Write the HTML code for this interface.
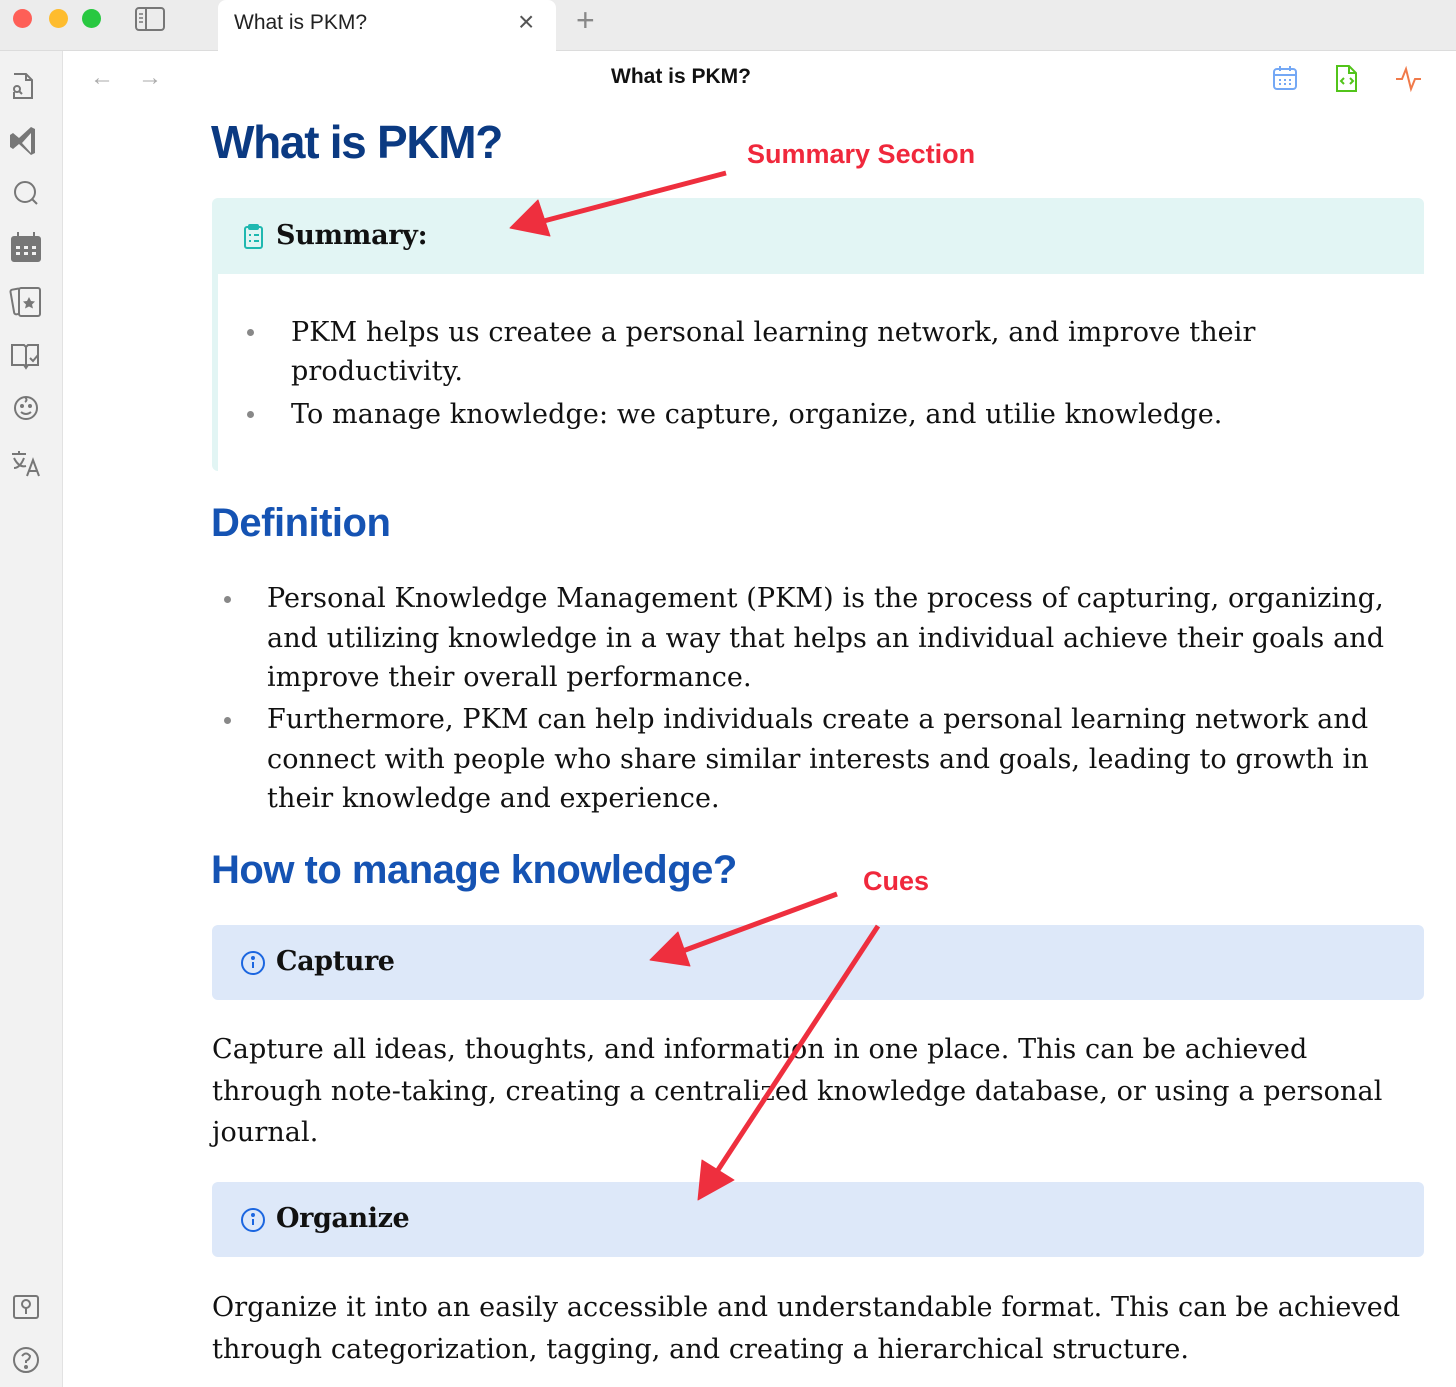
<!DOCTYPE html>
<html><head><meta charset="utf-8">
<style>
*{margin:0;padding:0;box-sizing:border-box}
body{width:1456px;height:1387px;overflow:hidden;background:#fff;font-family:"Liberation Sans",sans-serif;position:relative}
.abs{position:absolute}
.serif{font-family:"DejaVu Serif","Liberation Serif",serif;color:#111;font-size:27px;letter-spacing:0.1px;white-space:nowrap}
.h{font-weight:bold;color:#1553b3;white-space:nowrap}
.dot{position:absolute;width:7px;height:7px;border-radius:50%;background:#888}
</style></head><body>
<!-- tab bar -->
<div class="abs" style="left:0;top:0;width:1456px;height:51px;background:#ececec;border-bottom:1px solid #dcdcdc"></div>
<div class="abs" style="left:13px;top:9px;width:19px;height:19px;border-radius:50%;background:#fe5f57"></div>
<div class="abs" style="left:49px;top:9px;width:19px;height:19px;border-radius:50%;background:#febc2e"></div>
<div class="abs" style="left:82px;top:9px;width:19px;height:19px;border-radius:50%;background:#28c840"></div>
<svg class="abs" style="left:134px;top:6px" width="32" height="26"><rect x="2" y="2" width="28" height="22" rx="3" fill="none" stroke="#777" stroke-width="2"/><line x1="12" y1="2" x2="12" y2="24" stroke="#777" stroke-width="2"/><line x1="5" y1="8" x2="9" y2="8" stroke="#777" stroke-width="1.5"/><line x1="5" y1="12" x2="9" y2="12" stroke="#777" stroke-width="1.5"/><line x1="5" y1="16" x2="9" y2="16" stroke="#777" stroke-width="1.5"/></svg>
<div class="abs" style="left:218px;top:0;width:338px;height:52px;background:#fff;border-radius:8px 8px 0 0"></div>
<div class="abs" style="left:234px;top:11px;font-size:21px;color:#222">What is PKM?</div>
<div class="abs" style="left:518px;top:6px;font-size:28px;color:#555">×</div>
<div class="abs" style="left:576px;top:2px;font-size:32px;color:#888;font-weight:300">+</div>
<!-- sidebar -->
<div class="abs" style="left:0;top:51px;width:63px;height:1336px;background:#f2f2f2;border-right:1px solid #e2e2e2"></div>
<svg class="abs" style="left:0;top:60px" width="63" height="430" fill="none" stroke="#777" stroke-width="2">
<path d="M14 14h12l6 6v18H14v-6M26 14v6h6"/><circle cx="17" cy="29" r="3"/><path d="M19 31l3 3"/>
<path d="M31 67l-12 11-6-5-3 2v12l3 2 6-5 12 11 4-2V69z" fill="#777" stroke="none"/><path d="M31 73v20l-9-10z" fill="#f2f2f2" stroke="none"/>
<circle cx="25" cy="132" r="10"/><path d="M32 139l5 5"/>
<rect x="12" y="177" width="28" height="24" rx="2" fill="#777"/><path d="M18 172v8M34 172v8"/><g fill="#f2f2f2" stroke="none"><rect x="16" y="186" width="4" height="3"/><rect x="24" y="186" width="4" height="3"/><rect x="32" y="186" width="4" height="3"/><rect x="16" y="192" width="4" height="3"/><rect x="24" y="192" width="4" height="3"/><rect x="32" y="192" width="4" height="3"/></g>
<rect x="12" y="229" width="10" height="25" rx="2" transform="rotate(-10 17 240)"/><rect x="19" y="228" width="21" height="28" rx="2" fill="#f2f2f2"/><path d="M29 237l2 4 4 .5-3 3 1 4-4-2-4 2 1-4-3-3 4-.5z" fill="#777" stroke="none"/>
<path d="M12 285v20h12l2 3 2-3h10v-20h-10l-2 2-2-2zM26 287v20M30 298l3 3 5-6"/>
<circle cx="26" cy="348" r="11"/><circle cx="22" cy="346" r="1" fill="#777"/><circle cx="30" cy="346" r="1" fill="#777"/><path d="M21 352q5 4 10 0M25 337q3 3 0 5"/>
<path d="M12 394h14M19 391v3M14 398q5 10 12 8M24 398q-4 10-10 10"/><path d="M27 416l6-16 6 16M29 411h8"/>
</svg>
<svg class="abs" style="left:0;top:1285px" width="63" height="100" fill="none" stroke="#777" stroke-width="2">
<rect x="14" y="11" width="24" height="22" rx="2"/><circle cx="26" cy="19" r="4"/><path d="M26 23v6"/>
<circle cx="26" cy="75" r="12"/><path d="M22 71q4-5 8 0q0 3-4 5v2"/><circle cx="26" cy="82" r="1" fill="#777"/>
</svg>
<!-- nav -->
<div class="abs" style="left:90px;top:64px;font-size:24px;color:#aaa">←</div>
<div class="abs" style="left:138px;top:64px;font-size:24px;color:#aaa">→</div>
<div class="abs" style="left:611px;top:65px;font-size:21px;font-weight:bold;color:#111">What is PKM?</div>
<svg class="abs" style="left:1270px;top:62px" width="160" height="34" fill="none" stroke-width="2">
<rect x="4" y="7" width="22" height="20" rx="3" stroke="#74a8f5"/><path d="M4 13h22M10 4v5M20 4v5" stroke="#74a8f5"/><path d="M9 18h2M14 18h2M19 18h2M9 22h2M14 22h2M19 22h2" stroke="#74a8f5"/>
<path d="M67 4h12l7 7v18H67zM79 4v7h7" stroke="#52c41a"/><path d="M74 16l-3 3 3 3M80 16l3 3-3 3" stroke="#52c41a"/>
<path d="M126 17h6l4-10 5 20 4-10h6" stroke="#f07a4a"/>
</svg>
<!-- title -->
<div class="abs h" style="left:211px;top:115px;font-size:46px;color:#0b3a82;letter-spacing:-1.3px">What is PKM?</div>
<!-- summary callout -->
<div class="abs" style="left:212px;top:198px;width:1212px;height:273px;border-radius:6px;background:#e2f5f4"></div>
<div class="abs" style="left:218px;top:274px;width:1206px;height:197px;background:#fff"></div>
<svg class="abs" style="left:242px;top:223px" width="24" height="28" fill="none" stroke="#1fb8b0" stroke-width="2"><rect x="3" y="4" width="17" height="21" rx="2"/><rect x="7" y="2" width="9" height="4" rx="1"/><path d="M7 12h2M12 12h5M7 18h2M12 18h5"/></svg>
<div class="abs serif" style="left:276px;top:220px;font-weight:bold;font-size:27px;letter-spacing:-0.3px">Summary:</div>
<div class="dot" style="left:247px;top:329px"></div>
<div class="dot" style="left:247px;top:411px"></div>
<div class="abs serif" style="left:291px;top:313px;line-height:39px">PKM helps us createe a personal learning network, and improve their<br>productivity.</div>
<div class="abs serif" style="left:291px;top:395px;line-height:39px">To manage knowledge: we capture, organize, and utilie knowledge.</div>
<!-- definition -->
<div class="abs h" style="left:211px;top:501px;font-size:40px;letter-spacing:-0.5px">Definition</div>
<div class="dot" style="left:224px;top:596px"></div>
<div class="dot" style="left:224px;top:717px"></div>
<div class="abs serif" style="left:267px;top:579px;line-height:39.5px">Personal Knowledge Management (PKM) is the process of capturing, organizing,<br>and utilizing knowledge in a way that helps an individual achieve their goals and<br>improve their overall performance.</div>
<div class="abs serif" style="left:267px;top:700px;line-height:39.5px">Furthermore, PKM can help individuals create a personal learning network and<br>connect with people who share similar interests and goals, leading to growth in<br>their knowledge and experience.</div>
<div class="abs h" style="left:211px;top:848px;font-size:40px;letter-spacing:-0.5px">How to manage knowledge?</div>
<!-- capture -->
<div class="abs" style="left:212px;top:925px;width:1212px;height:75px;border-radius:6px;background:#dde8f9"></div>
<svg class="abs" style="left:240px;top:950px" width="26" height="26" fill="none" stroke="#1b66e0" stroke-width="2"><circle cx="13" cy="13" r="11"/><path d="M13 12v6"/><circle cx="13" cy="8" r="1" fill="#1b66e0"/></svg>
<div class="abs serif" style="left:276px;top:946px;font-weight:bold;font-size:27px;letter-spacing:-0.4px">Capture</div>
<div class="abs serif" style="left:212px;top:1029px;line-height:41.5px">Capture all ideas, thoughts, and information in one place. This can be achieved<br>through note-taking, creating a centralized knowledge database, or using a personal<br>journal.</div>
<!-- organize -->
<div class="abs" style="left:212px;top:1182px;width:1212px;height:75px;border-radius:6px;background:#dde8f9"></div>
<svg class="abs" style="left:240px;top:1207px" width="26" height="26" fill="none" stroke="#1b66e0" stroke-width="2"><circle cx="13" cy="13" r="11"/><path d="M13 12v6"/><circle cx="13" cy="8" r="1" fill="#1b66e0"/></svg>
<div class="abs serif" style="left:276px;top:1203px;font-weight:bold;font-size:27px;letter-spacing:-0.4px">Organize</div>
<div class="abs serif" style="left:212px;top:1287px;line-height:42px">Organize it into an easily accessible and understandable format. This can be achieved<br>through categorization, tagging, and creating a hierarchical structure.</div>
<!-- annotations -->
<div class="abs" style="left:747px;top:139px;font-size:27px;font-weight:bold;color:#f0283c">Summary Section</div>
<div class="abs" style="left:863px;top:866px;font-size:27px;font-weight:bold;color:#f0283c">Cues</div>
<svg class="abs" style="left:0;top:0" width="1456" height="1387">
<g fill="#ee2f3e" stroke="#ee2f3e" stroke-linejoin="round">
<line x1="726" y1="173" x2="540" y2="222" stroke-width="5"/>
<polygon points="510,228 538,200 550,236"/>
<line x1="837" y1="894" x2="680" y2="952" stroke-width="5"/>
<polygon points="650,960 678,932 690,966"/>
<line x1="878" y1="926" x2="718" y2="1170" stroke-width="5"/>
<polygon points="698,1200 702,1160 734,1180"/>
</g>
</svg>
</body></html>
